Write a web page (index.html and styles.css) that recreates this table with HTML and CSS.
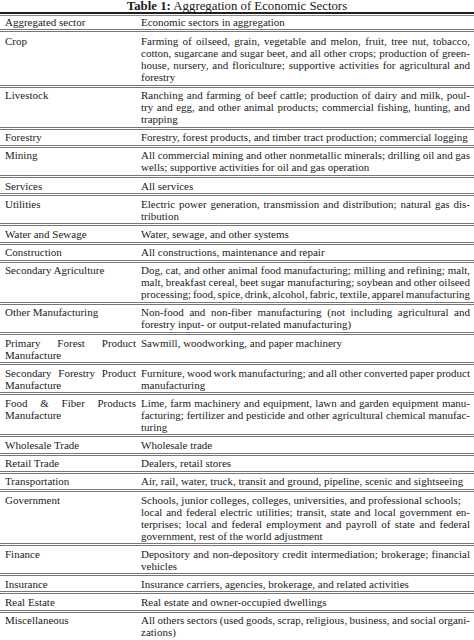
FILE: index.html
```html
<!DOCTYPE html>
<html>
<head>
<meta charset="utf-8">
<link rel="stylesheet" href="styles.css">
</head>
<body>
<div class="page">
  <div class="caption"><b>Table 1:</b> Aggregation of Economic Sectors</div>
  <div class="table">
    <div class="row head">
      <div class="c1">Aggregated sector</div>
      <div class="c2">Economic sectors in aggregation</div>
    </div>
    <div class="row first">
      <div class="c1">Crop</div>
      <div class="c2">
        <span class="j">Farming of oilseed, grain, vegetable and melon, fruit, tree nut, tobacco,</span>
        <span class="j">cotton, sugarcane and sugar beet, and all other crops; production of green-</span>
        <span class="j">house, nursery, and floriculture; supportive activities for agricultural and</span>
        <span class="l">forestry</span>
      </div>
    </div>
    <div class="row">
      <div class="c1">Livestock</div>
      <div class="c2">
        <span class="j">Ranching and farming of beef cattle; production of dairy and milk, poul-</span>
        <span class="j">try and egg, and other animal products; commercial fishing, hunting, and</span>
        <span class="l">trapping</span>
      </div>
    </div>
    <div class="row">
      <div class="c1">Forestry</div>
      <div class="c2"><span class="l">Forestry, forest products, and timber tract production; commercial logging</span></div>
    </div>
    <div class="row">
      <div class="c1">Mining</div>
      <div class="c2">
        <span class="j">All commercial mining and other nonmetallic minerals; drilling oil and gas</span>
        <span class="l">wells; supportive activities for oil and gas operation</span>
      </div>
    </div>
    <div class="row">
      <div class="c1">Services</div>
      <div class="c2"><span class="l">All services</span></div>
    </div>
    <div class="row">
      <div class="c1">Utilities</div>
      <div class="c2">
        <span class="j">Electric power generation, transmission and distribution; natural gas dis-</span>
        <span class="l">tribution</span>
      </div>
    </div>
    <div class="row">
      <div class="c1">Water and Sewage</div>
      <div class="c2"><span class="l">Water, sewage, and other systems</span></div>
    </div>
    <div class="row">
      <div class="c1">Construction</div>
      <div class="c2"><span class="l">All constructions, maintenance and repair</span></div>
    </div>
    <div class="row">
      <div class="c1">Secondary Agriculture</div>
      <div class="c2">
        <span class="j">Dog, cat, and other animal food manufacturing; milling and refining; malt,</span>
        <span class="j">malt, breakfast cereal, beet sugar manufacturing; soybean and other oilseed</span>
        <span class="j">processing; food, spice, drink, alcohol, fabric, textile, apparel manufacturing</span>
      </div>
    </div>
    <div class="row">
      <div class="c1">Other Manufacturing</div>
      <div class="c2">
        <span class="j">Non-food and non-fiber manufacturing (not including agricultural and</span>
        <span class="l">forestry input- or output-related manufacturing)</span>
      </div>
    </div>
    <div class="row">
      <div class="c1"><span class="j">Primary Forest Product</span><span class="l">Manufacture</span></div>
      <div class="c2"><span class="l">Sawmill, woodworking, and paper machinery</span></div>
    </div>
    <div class="row">
      <div class="c1"><span class="j">Secondary Forestry Product</span><span class="l">Manufacture</span></div>
      <div class="c2">
        <span class="j">Furniture, wood work manufacturing; and all other converted paper product</span>
        <span class="l">manufacturing</span>
      </div>
    </div>
    <div class="row">
      <div class="c1"><span class="j">Food &amp; Fiber Products</span><span class="l">Manufacture</span></div>
      <div class="c2">
        <span class="j">Lime, farm machinery and equipment, lawn and garden equipment manu-</span>
        <span class="j">facturing; fertilizer and pesticide and other agricultural chemical manufac-</span>
        <span class="l">turing</span>
      </div>
    </div>
    <div class="row">
      <div class="c1">Wholesale Trade</div>
      <div class="c2"><span class="l">Wholesale trade</span></div>
    </div>
    <div class="row">
      <div class="c1">Retail Trade</div>
      <div class="c2"><span class="l">Dealers, retail stores</span></div>
    </div>
    <div class="row">
      <div class="c1">Transportation</div>
      <div class="c2"><span class="l">Air, rail, water, truck, transit and ground, pipeline, scenic and sightseeing</span></div>
    </div>
    <div class="row">
      <div class="c1">Government</div>
      <div class="c2">
        <span class="l">Schools, junior colleges, colleges, universities, and professional schools;</span>
        <span class="j">local and federal electric utilities; transit, state and local government en-</span>
        <span class="j">terprises; local and federal employment and payroll of state and federal</span>
        <span class="l">government, rest of the world adjustment</span>
      </div>
    </div>
    <div class="row">
      <div class="c1">Finance</div>
      <div class="c2">
        <span class="j">Depository and non-depository credit intermediation; brokerage; financial</span>
        <span class="l">vehicles</span>
      </div>
    </div>
    <div class="row">
      <div class="c1">Insurance</div>
      <div class="c2"><span class="l">Insurance carriers, agencies, brokerage, and related activities</span></div>
    </div>
    <div class="row">
      <div class="c1">Real Estate</div>
      <div class="c2"><span class="l">Real estate and owner-occupied dwellings</span></div>
    </div>
    <div class="row last">
      <div class="c1">Miscellaneous</div>
      <div class="c2">
        <span class="j">All others sectors (used goods, scrap, religious, business, and social organi-</span>
        <span class="l">zations)</span>
      </div>
    </div>
  </div>
</div>
</body>
</html>
```

FILE: styles.css
```css
html, body {
  margin: 0;
  padding: 0;
  background: #ffffff;
}

.page {
  width: 474px;
  font-family: "Liberation Serif", "Times New Roman", serif;
  color: #222222;
  font-size: 11px;
  line-height: 12px;
}

.caption {
  height: 12px;
  text-align: center;
  font-size: 12.8px;
  line-height: 12px;
  color: #1a1a1a;
}

.caption b {
  font-weight: bold;
}

.table {
  border-top: 2px solid #1e1e1e;
  border-bottom: 2px solid #2a2a2a;
}

.row {
  display: grid;
  grid-template-columns: 131px 329px;
  column-gap: 5px;
  padding: 1.58px 4px 1.58px 5px;
  border-bottom: 3px double #777777;
}

.row.head {
  margin-top: 1px;
  border-top: 1px solid #8a8a8a;
  padding-top: 0;
  padding-bottom: 0.5px;
}

.row.first {
  padding-top: 3.5px;
}

.row.last {
  border-bottom: 1px solid #8a8a8a;
  margin-bottom: 1px;
}

.c1, .c2 {
  white-space: nowrap;
}

.j {
  display: block;
  text-align: justify;
  text-align-last: justify;
  word-spacing: -1.2px;
}

.l {
  display: block;
  text-align: left;
}
```
